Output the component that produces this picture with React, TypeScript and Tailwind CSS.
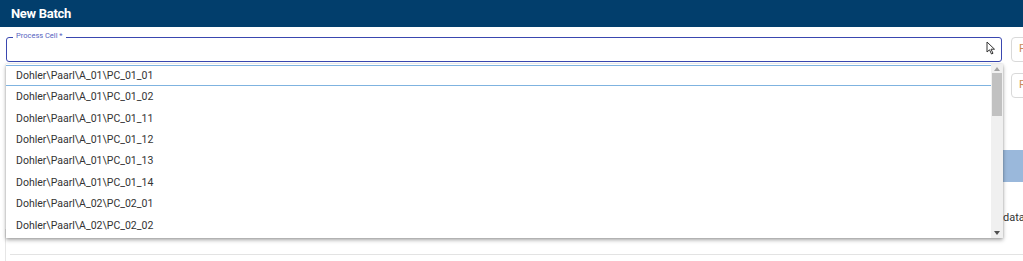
import React from "react";

const items = [
  "Dohler\\Paarl\\A_01\\PC_01_01",
  "Dohler\\Paarl\\A_01\\PC_01_02",
  "Dohler\\Paarl\\A_01\\PC_01_11",
  "Dohler\\Paarl\\A_01\\PC_01_12",
  "Dohler\\Paarl\\A_01\\PC_01_13",
  "Dohler\\Paarl\\A_01\\PC_01_14",
  "Dohler\\Paarl\\A_02\\PC_02_01",
  "Dohler\\Paarl\\A_02\\PC_02_02",
];

export default function App() {
  return (
    <div
      className="w-[1023px] h-[261px] overflow-hidden bg-white relative"
      style={{ fontFamily: "Roboto, 'Liberation Sans', sans-serif" }}
    >
      <div className="h-[27px] bg-[#023e6c] flex items-center pl-[11px]">
        <span className="text-white font-bold text-[13px] tracking-[-0.3px]">New Batch</span>
      </div>

      <div className="relative">
        {/* form row 1 */}
        <div className="flex pt-[10px]">
          <div className="ml-[6px] w-[996px] shrink-0 h-[25px] border border-[#3a48b0] rounded-[3px] relative">
            <span className="absolute left-[6px] top-[-7px] bg-white px-[3px] text-[7.5px] leading-[10px] text-[#5563c0]">
              Process Cell *
            </span>
            <svg className="absolute right-[4px] top-[3px]" width="12" height="14" viewBox="0 0 12 14">
              <path d="M2 1 L2 11 L4.5 8.8 L6.5 13 L8 12.3 L6 8.2 L9.5 8.2 Z" fill="white" stroke="#333" strokeWidth="1" strokeLinejoin="round" />
            </svg>
          </div>
          <div className="ml-[9px] w-[120px] shrink-0 h-[25px] border border-[#d9d9d9] rounded-[4px] flex items-center pl-[7px] overflow-hidden">
            <span className="text-[11px] text-[#c98a5a] whitespace-nowrap">Process</span>
          </div>
        </div>
        {/* form row 2 */}
        <div className="flex pt-[11px]">
          <div className="ml-[6px] w-[996px] shrink-0 h-[25px]" />
          <div className="ml-[9px] w-[120px] shrink-0 h-[25px] border border-[#d9d9d9] rounded-[4px] flex items-center pl-[7px] overflow-hidden">
            <span className="text-[11px] text-[#c98a5a] whitespace-nowrap">Recipe</span>
          </div>
        </div>
        {/* blue bar */}
        <div className="mt-[52px] ml-[6px] h-[32px] bg-[#9ab8db]" />
        {/* data text */}
        <div className="mt-[29px] pl-[1003px] text-[11px] text-[#333] leading-[14px] whitespace-nowrap">data</div>
        {/* card */}
        <div className="mt-[4px] ml-[5px] border-l border-[#e6e6e6] h-[40px] pt-[25px]">
          <div className="ml-[4px] border-t border-[#e3e3e3]" />
        </div>

        {/* dropdown */}
        <div className="absolute left-[6px] top-[37px] w-[997px] h-[174px] bg-white shadow-[0_2px_4px_rgba(0,0,0,0.35),0_0_2px_rgba(0,0,0,0.15)] flex">
          <div className="flex-1 pt-[1px]">
            {items.map((t, i) => (
              <div
                key={t}
                className={
                  "h-[21.4px] flex items-center pl-[10px] text-[10.5px] text-[#333] whitespace-nowrap " +
                  (i === 0 ? "border-y border-[#7fb3e0]" : "")
                }
              >
                {t}
              </div>
            ))}
          </div>
          <div className="w-[12px] bg-[#f0f0f0] flex flex-col items-center">
            <div className="h-[9px] flex items-center justify-center">
              <svg width="6" height="4" viewBox="0 0 6 4"><path d="M0 4 L3 0 L6 4 Z" fill="#a3a3a3" /></svg>
            </div>
            <div className="w-[10px] h-[43px] bg-[#c1c1c1]" />
            <div className="flex-1" />
            <div className="h-[10px] flex items-center justify-center">
              <svg width="6" height="4" viewBox="0 0 6 4"><path d="M0 0 L6 0 L3 4 Z" fill="#505050" /></svg>
            </div>
          </div>
        </div>
      </div>
    </div>
  );
}
